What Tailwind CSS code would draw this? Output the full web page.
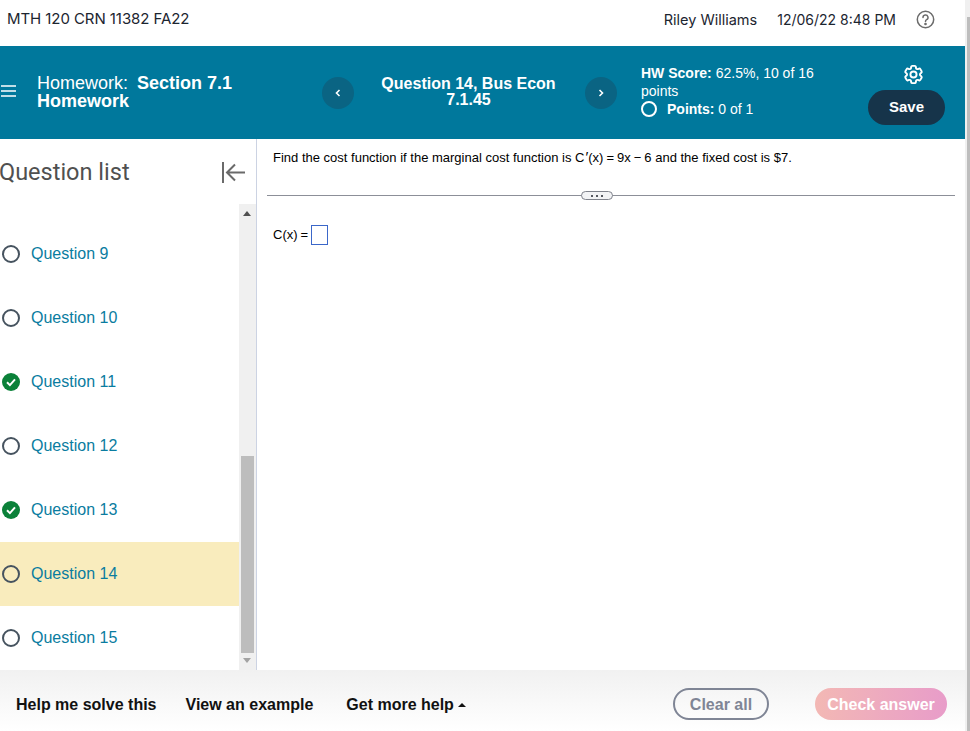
<!DOCTYPE html>
<html lang="en">
<head>
<meta charset="utf-8">
<title>Homework: Section 7.1 Homework</title>
<script src="https://cdn.jsdelivr.net/npm/@tailwindcss/browser@4"></script>
</head>
<body class="bg-white overflow-hidden font-['Liberation_Sans',Arial,sans-serif]">
<div class="flex h-[731px] w-[970px]">
  <div class="flex flex-col w-[965px] shrink-0">

    <!-- top bar -->
    <div class="flex items-center h-[46px] pl-[7px] pr-[30px] text-[#1c2530] font-['Inter',sans-serif]">
      <div class="flex-1 pb-[7px] text-[15px] tracking-[-0.07px]">MTH 120 CRN 11382 FA22</div>
      <div class="pb-[7px] text-[14.5px]">Riley Williams</div>
      <div class="pb-[7px] ml-[20px] text-[14px]">12/06/22 8:48 PM</div>
      <svg class="ml-[20px] mb-[7px]" width="19" height="19" viewBox="0 0 19 19" fill="none" stroke="#6b6b6b" stroke-width="1.5"><circle cx="9.5" cy="9.5" r="8.2"/><path d="M7 7.5a2.5 2.5 0 1 1 3.6 2.2c-.8.4-1.1.9-1.1 1.7" stroke-linecap="round"/><circle cx="9.5" cy="14" r=".6" fill="#6b6b6b"/></svg>
    </div>

    <!-- teal header -->
    <div class="flex items-center h-[93px] bg-[#00789c] text-white shrink-0">
      <svg class="ml-[1px] mb-[4px]" width="16" height="14" viewBox="0 0 16 14" stroke="#fff" stroke-width="1.4"><path d="M0 2h15M0 7h15M0 12h15"/></svg>
      <div class="ml-[20px] w-[285px] text-[18px] leading-[18px] font-bold mb-[2px]">
        <span class="font-normal">Homework:</span><span class="ml-[9px]">Section 7.1</span><br>Homework
      </div>
      <button class="flex items-center justify-center w-8 h-8 rounded-full bg-[#0a6483]">
        <svg width="8" height="10" viewBox="0 0 8 10" fill="none" stroke="#fff" stroke-width="1.6"><path d="M5.5 2 2.5 5l3 3"/></svg>
      </button>
      <div class="w-[231px] text-center text-[16px] leading-[16px] font-bold pr-[2px] mb-[1px]">Question 14, Bus Econ<br>7.1.45</div>
      <button class="flex items-center justify-center w-8 h-8 rounded-full bg-[#0a6483]">
        <svg width="8" height="10" viewBox="0 0 8 10" fill="none" stroke="#fff" stroke-width="1.6"><path d="M2.5 2l3 3-3 3"/></svg>
      </button>
      <div class="ml-[24px] w-[227px] text-[14px] leading-[18px] mb-[4px]">
        <div><b>HW Score:</b> 62.5%, 10 of 16</div>
        <div>points</div>
        <div class="flex items-center">
          <span class="w-4 h-4 rounded-full border-2 border-white mr-[10px]"></span>
          <span><b>Points:</b> 0 of 1</span>
        </div>
      </div>
      <div class="flex flex-col items-center mt-[2px]">
        <svg class="ml-[14px] mb-[4px]" width="23" height="23" viewBox="0 0 24 24" fill="none" stroke="#fff" stroke-width="2" stroke-linejoin="round"><path d="M9.594 3.94c.09-.542.56-.94 1.11-.94h2.593c.55 0 1.02.398 1.11.94l.213 1.281c.063.374.313.686.645.87.074.04.147.083.22.127.325.196.72.257 1.075.124l1.217-.456a1.125 1.125 0 0 1 1.37.49l1.296 2.247a1.125 1.125 0 0 1-.26 1.431l-1.003.827c-.293.241-.438.613-.43.992a7.723 7.723 0 0 1 0 .255c-.008.378.137.75.43.991l1.004.827c.424.35.534.955.26 1.43l-1.298 2.247a1.125 1.125 0 0 1-1.369.491l-1.217-.456c-.355-.133-.75-.072-1.076.124a6.47 6.47 0 0 1-.22.128c-.331.183-.581.495-.644.869l-.213 1.281c-.09.543-.56.94-1.11.94h-2.594c-.55 0-1.019-.398-1.11-.94l-.213-1.281c-.062-.374-.312-.686-.644-.87a6.52 6.52 0 0 1-.22-.127c-.325-.196-.72-.257-1.076-.124l-1.217.456a1.125 1.125 0 0 1-1.369-.49l-1.297-2.247a1.125 1.125 0 0 1 .26-1.431l1.004-.827c.292-.24.437-.613.43-.991a6.932 6.932 0 0 1 0-.255c.007-.38-.138-.751-.43-.992l-1.004-.827a1.125 1.125 0 0 1-.26-1.43l1.297-2.247a1.125 1.125 0 0 1 1.37-.491l1.216.456c.356.133.751.072 1.076-.124.072-.044.146-.086.22-.128.332-.183.582-.495.644-.869l.214-1.28Z"/><circle cx="12" cy="12" r="3.2"/></svg>
        <button class="w-[77px] h-[35px] rounded-full bg-[#16344a] text-[15px] font-bold text-white">Save</button>
      </div>
    </div>

    <!-- body -->
    <div class="flex flex-1 min-h-0">
      <!-- question list -->
      <div class="w-[257px] shrink-0 flex flex-col border-r border-[#ccd3e3] overflow-hidden">
        <div class="flex items-center justify-between h-[65px] pt-[2px] shrink-0 pr-[11px] text-[#505050]">
          <span class="text-[23.5px] font-['Roboto',sans-serif] -ml-[1px]">Question list</span>
          <svg width="23" height="21" viewBox="0 0 23 21" fill="none" stroke="#6a6a6a" stroke-width="2"><path d="M1 0v21M23 10.5H5M13 2.5l-8 8 8 8"/></svg>
        </div>
        <div class="flex flex-1 min-h-0">
          <div class="flex-1 pt-[18px] text-[16px] text-[#0a7ca0]">
            <div class="flex items-center h-16"><span class="w-[18px] h-[18px] ml-[2px] mr-[11px] rounded-full border-2 border-[#46535f]"></span>Question 9</div>
            <div class="flex items-center h-16"><span class="w-[18px] h-[18px] ml-[2px] mr-[11px] rounded-full border-2 border-[#46535f]"></span>Question 10</div>
            <div class="flex items-center h-16"><svg class="ml-[2px] mr-[11px]" width="18" height="18" viewBox="0 0 18 18"><circle cx="9" cy="9" r="9" fill="#0b8139"/><path d="M5 9.3l2.9 2.8L13 6.4" fill="none" stroke="#fff" stroke-width="2"/></svg>Question 11</div>
            <div class="flex items-center h-16"><span class="w-[18px] h-[18px] ml-[2px] mr-[11px] rounded-full border-2 border-[#46535f]"></span>Question 12</div>
            <div class="flex items-center h-16"><svg class="ml-[2px] mr-[11px]" width="18" height="18" viewBox="0 0 18 18"><circle cx="9" cy="9" r="9" fill="#0b8139"/><path d="M5 9.3l2.9 2.8L13 6.4" fill="none" stroke="#fff" stroke-width="2"/></svg>Question 13</div>
            <div class="flex items-center h-16 bg-[#f9ecbd]"><span class="w-[18px] h-[18px] ml-[2px] mr-[11px] rounded-full border-2 border-[#46535f]"></span>Question 14</div>
            <div class="flex items-center h-16"><span class="w-[18px] h-[18px] ml-[2px] mr-[11px] rounded-full border-2 border-[#46535f]"></span>Question 15</div>
          </div>
          <!-- scrollbar -->
          <div class="w-[17px] shrink-0 bg-[#f0f0f0] flex flex-col pl-[2px]">
            <svg class="mt-[7px] ml-[2px]" width="8" height="5" viewBox="0 0 8 5"><path d="M4 0l4 5H0z" fill="#505050"/></svg>
            <div class="flex-1"></div>
            <div class="w-[13px] h-[197px] bg-[#bdbdbd]"></div>
            <svg class="mt-[5px] mb-[7px] ml-[2px]" width="8" height="5" viewBox="0 0 8 5"><path d="M4 5l4-5H0z" fill="#a3a3a3"/></svg>
          </div>
        </div>
      </div>

      <!-- question -->
      <div class="flex-1 pl-[16px] pr-[10px] text-[13px] text-black">
        <div class="pt-[11px] h-[56px] leading-[14px]">Find the cost function if the marginal cost function is C<span class="ml-[1px] text-[15px] leading-[14px]">&#8242;</span>(x)<span class="mx-[3px]">=</span>9x<span class="mx-[3px]">&#8722;</span>6 and the fixed cost is $7.</div>
        <div class="relative h-px -ml-[6px] bg-[#8c8f98]">
          <div class="absolute left-[314px] -top-[4px] flex items-center justify-center w-[32px] h-[9px] rounded-full border border-[#7f828b] bg-[#f2f3f5]">
            <span class="flex gap-[3px]"><i class="w-[2px] h-[2px] bg-[#55585f]"></i><i class="w-[2px] h-[2px] bg-[#55585f]"></i><i class="w-[2px] h-[2px] bg-[#55585f]"></i></span>
          </div>
        </div>
        <div class="flex items-center mt-[29px]">C(x)<span class="ml-[3px]">=</span><span class="ml-[3px] w-[17px] h-[20px] border border-[#3b67c9]"></span></div>
      </div>
    </div>

    <!-- footer -->
    <div class="flex items-center h-[61px] shrink-0 bg-gradient-to-b from-[#f1f1f1] to-white text-[16px] font-bold text-[#111] pr-[18px]">
      <span class="ml-[16px] mt-[8px]">Help me solve this</span>
      <span class="ml-[29px] mt-[8px]">View an example</span>
      <span class="ml-[33px] mt-[8px]">Get more help</span>
      <svg class="ml-[4px] mt-[8px]" width="8" height="4" viewBox="0 0 8 4"><path d="M4 0l4 4H0z" fill="#111"/></svg>
      <div class="flex-1"></div>
      <button class="mt-[7px] pt-[1px] w-[96px] h-[32px] rounded-full border-2 border-[#7f8595] text-[#7f8595] font-bold">Clear all</button>
      <button class="mt-[7px] pt-[1px] ml-[46px] w-[132px] h-[32px] rounded-full bg-gradient-to-r from-[#f3b8b4] to-[#e89cc9] text-white font-bold">Check answer</button>
    </div>
  </div>
  <!-- page scrollbar -->
  <div class="flex-1 bg-[#f0f0f0] pl-[2px] pt-[17px]">
    <div class="h-full bg-[#bdbdbd]"></div>
  </div>
</div>
</body>
</html>
